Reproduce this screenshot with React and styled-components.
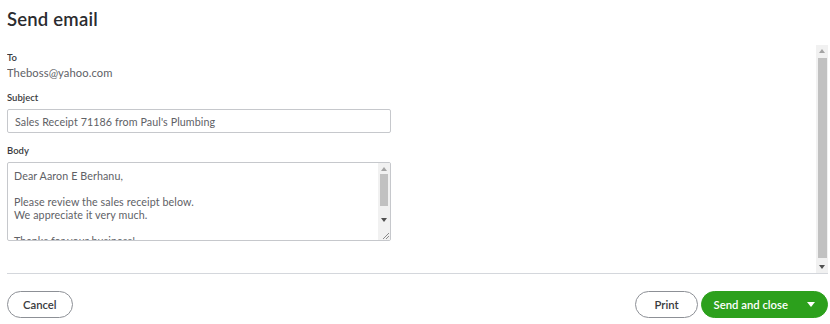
import React from "react";
import styled, { createGlobalStyle } from "styled-components";

const GlobalStyle = createGlobalStyle`
  html, body {
    margin: 0;
    padding: 0;
    background: #ffffff;
  }
  body {
    font-family: Lato, "Open Sans", "Liberation Sans", sans-serif;
    color: #393a3d;
  }
`;

const Page = styled.div`
  width: 830px;
  height: 324px;
  display: flex;
  flex-direction: column;
  box-sizing: border-box;
  padding-left: 7px;
  padding-right: 2px;
  overflow: hidden;
`;

const Header = styled.div`
  height: 45px;
  display: flex;
  align-items: flex-start;
`;

const Title = styled.h1`
  margin: 7px 0 0;
  font-size: 18.5px;
  line-height: 24px;
  font-weight: 600;
  color: #2b2c2f;
  letter-spacing: 0.2px;
`;

const ScrollArea = styled.div`
  height: 229px;
  box-sizing: border-box;
  display: flex;
  border-bottom: 1px solid #d4d7dc;
`;

const Form = styled.div`
  flex: 1;
  display: flex;
  flex-direction: column;
  padding-top: 6px;
  overflow: hidden;
`;

// fake scrollbar pieces (the headless browser hides native ones)
const Bar = styled.div`
  width: ${(p) => p.$w || 12}px;
  display: flex;
  flex-direction: column;
  background: #f1f1f1;
  flex-shrink: 0;
`;

const Arrow = styled.div`
  height: ${(p) => p.$h || 12}px;
  display: flex;
  align-items: center;
  justify-content: center;
  flex-shrink: 0;
`;

const Track = styled.div`
  flex: 1;
  display: flex;
  flex-direction: column;
  align-items: center;
`;

const Thumb = styled.div`
  width: ${(p) => p.$w || 8}px;
  height: ${(p) => p.$h}px;
  margin-top: ${(p) => p.$top || 0}px;
  background: #c1c1c1;
`;

const Corner = styled.div`
  height: 14px;
  flex-shrink: 0;
  display: flex;
  align-items: flex-end;
  justify-content: flex-end;
  background: #f1f1f1;
`;

const Tri = ({ up, color }) => (
  <svg width="6" height="4" viewBox="0 0 6 4">
    <path d={up ? "M3 0 L6 4 L0 4 Z" : "M0 0 L6 0 L3 4 Z"} fill={color} />
  </svg>
);

const Label = styled.label`
  display: block;
  font-size: 9.5px;
  line-height: 14px;
  font-weight: 600;
  color: #393a3d;
  margin-top: ${(p) => p.$top || 0}px;
  margin-bottom: ${(p) => p.$bottom || 0}px;
`;

const Value = styled.div`
  font-size: 11.2px;
  line-height: 14px;
  color: #606166;
  margin-top: 1px;
  letter-spacing: 0.1px;
`;

const Field = styled.div`
  width: 384px;
  height: 24px;
  flex-shrink: 0;
  box-sizing: border-box;
  border: 1px solid #c6c8cc;
  border-radius: 2px;
  display: flex;
  align-items: center;
  padding-left: 7px;
  font-size: 10.7px;
  color: #606166;
  letter-spacing: 0.1px;
`;

const BodyBox = styled.div`
  width: 384px;
  height: 79px;
  flex-shrink: 0;
  box-sizing: border-box;
  border: 1px solid #c6c8cc;
  border-radius: 2px;
  display: flex;
  overflow: hidden;
`;

const BodyText = styled.div`
  flex: 1;
  padding: 6px 6px 0;
  font-size: 10.7px;
  line-height: 13px;
  color: #606166;
  white-space: pre-wrap;
  overflow: hidden;
  letter-spacing: 0.1px;
`;

const Footer = styled.div`
  flex: 1;
  display: flex;
  align-items: flex-start;
  justify-content: space-between;
  padding-top: 17px;
`;

const Group = styled.div`
  display: flex;
  gap: 3px;
`;

const Pill = styled.button`
  height: 27px;
  box-sizing: border-box;
  padding: 0 ${(p) => p.$pad || 18}px;
  border-radius: 14px;
  border: 1px solid ${(p) => (p.$primary ? "#2ca01c" : "#8d9096")};
  background: ${(p) => (p.$primary ? "#2ca01c" : "#ffffff")};
  color: ${(p) => (p.$primary ? "#ffffff" : "#393a3d")};
  font-family: Lato, "Open Sans", "Liberation Sans", sans-serif;
  font-size: 11.3px;
  font-weight: 600;
  display: flex;
  align-items: center;
  gap: 19px;
  cursor: pointer;
`;

const Caret = styled.svg`
  width: 8px;
  height: 5px;
`;

const bodyText = `Dear Aaron E Berhanu,

Please review the sales receipt below.
We appreciate it very much.

Thanks for your business!
Paul's Plumbing`;

export default function App() {
  return (
    <>
      <GlobalStyle />
      <Page>
        <Header>
          <Title>Send email</Title>
        </Header>
        <ScrollArea>
          <Form>
            <Label>To</Label>
            <Value>Theboss@yahoo.com</Value>
            <Label $top={11} $bottom={4}>Subject</Label>
            <Field>Sales Receipt 71186 from Paul's Plumbing</Field>
            <Label $top={11} $bottom={4}>Body</Label>
            <BodyBox>
              <BodyText>{bodyText}</BodyText>
              <Bar $w={12}>
                <Arrow $h={11}>
                  <Tri up color="#a3a3a3" />
                </Arrow>
                <Track>
                  <Thumb $h={32} />
                </Track>
                <Arrow $h={12}>
                  <Tri color="#505050" />
                </Arrow>
                <Corner>
                  <svg width="9" height="9" viewBox="0 0 9 9">
                    <path d="M8 2 L2 8 M8 5 L5 8" stroke="#8a8a8a" strokeWidth="1" />
                  </svg>
                </Corner>
              </Bar>
            </BodyBox>
          </Form>
          <Bar $w={12}>
            <Arrow $h={12}>
              <Tri up color="#a3a3a3" />
            </Arrow>
            <Track>
              <Thumb $h={200} $top={1} $w={9} />
            </Track>
            <Arrow $h={12}>
              <Tri color="#505050" />
            </Arrow>
          </Bar>
        </ScrollArea>
        <Footer>
          <Pill $pad={15}>Cancel</Pill>
          <Group>
            <Pill $pad={18}>Print</Pill>
            <Pill $primary $pad={12}>
              Send and close
              <Caret viewBox="0 0 8 5">
                <path d="M0 0 L8 0 L4 5 Z" fill="#ffffff" />
              </Caret>
            </Pill>
          </Group>
        </Footer>
      </Page>
    </>
  );
}
